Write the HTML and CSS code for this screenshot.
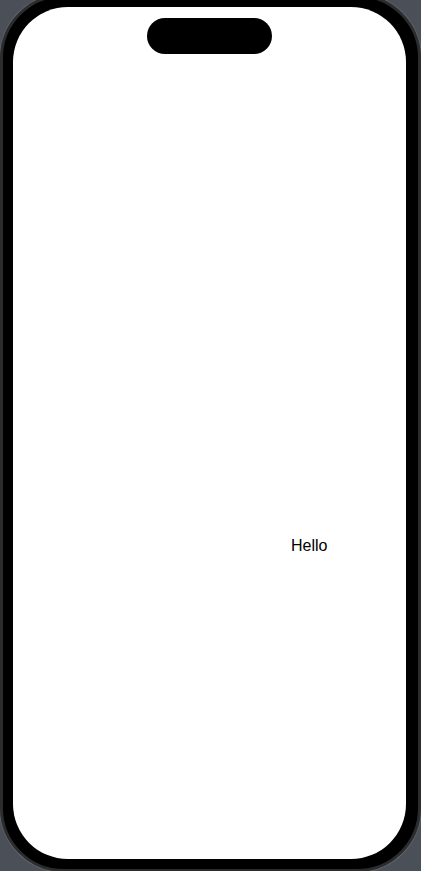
FILE: index.html
```html
<!DOCTYPE html>
<html lang="en">
<head>
<meta charset="utf-8">
<title>Hello</title>
<link rel="stylesheet" href="styles.css">
</head>
<body>
<div class="device">
  <div class="screen">
    <div class="island"></div>
    <div class="content">
      <span class="hello">Hello</span>
    </div>
  </div>
</div>
</body>
</html>
```

FILE: styles.css
```css
html, body {
  margin: 0;
  padding: 0;
  background: #4b5058;
  overflow: hidden;
}
body {
  width: 421px;
  height: 871px;
  font-family: "Liberation Sans", Arial, sans-serif;
}
.device {
  box-sizing: border-box;
  width: 421px;
  height: 878px;
  margin-top: -6px;
  background: #000;
  border: 3px solid #2c2c2e;
  border-radius: 64px;
  box-shadow: 0 0 0 1px #60656c;
  padding: 10px 12px 10px 10px;
  display: flex;
}
.screen {
  flex: 1;
  background: #fff;
  border-radius: 55px;
  display: flex;
  flex-direction: column;
  align-items: center;
}
.island {
  margin-top: 11px;
  width: 125px;
  height: 36px;
  border-radius: 18px;
  background: #000;
  flex: none;
}
.content {
  align-self: stretch;
  padding-left: 278px;
  padding-top: 483px;
}
.hello {
  display: block;
  font-size: 16px;
  line-height: 18px;
  color: #000;
}
```
